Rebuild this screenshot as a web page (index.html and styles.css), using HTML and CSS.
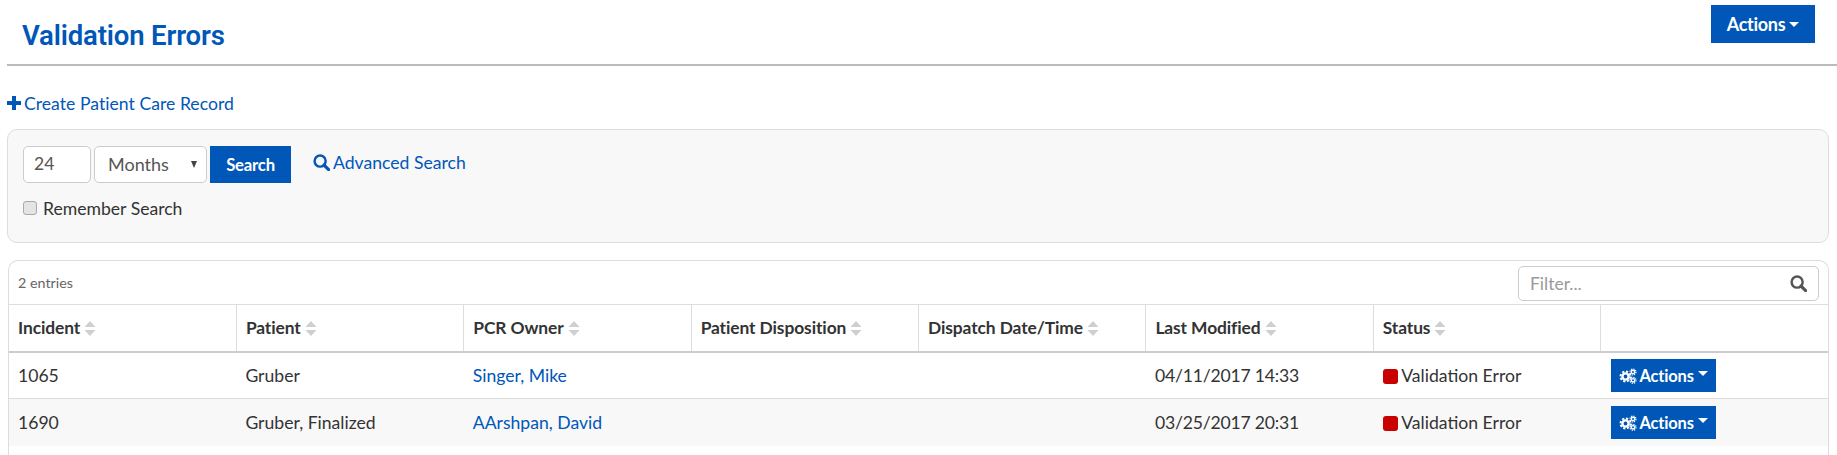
FILE: index.html
```html
<!DOCTYPE html>
<html lang="en">
<head>
<meta charset="utf-8">
<title>Validation Errors</title>
<link rel="stylesheet" href="styles.css">
</head>
<body>
<svg class="defs" width="0" height="0" aria-hidden="true">
  <symbol id="search" viewBox="0 0 16 16"><circle cx="6.7" cy="6.7" r="5.2" fill="none" stroke="currentColor" stroke-width="2.3"/><path d="M10.4 10.4l4.3 4.3" fill="none" stroke="currentColor" stroke-width="3" stroke-linecap="round"/></symbol>
  <symbol id="sort" viewBox="0 0 12 15"><path d="M6 0l5.5 6H.5zM6 15L.5 9h11z" fill="#cfcfcf"/></symbol>
  <symbol id="cogs" viewBox="0 0 18 16"><g fill="none" stroke="#fff"><circle cx="6.5" cy="8.5" r="3.1" stroke-width="2.4"/><circle cx="6.5" cy="8.5" r="5" stroke-width="2" stroke-dasharray="2.2 1.7"/><circle cx="14" cy="4" r="1.7" stroke-width="1.4"/><circle cx="14" cy="4" r="3" stroke-width="1.2" stroke-dasharray="1.3 1.05"/><circle cx="14" cy="12.3" r="1.7" stroke-width="1.4"/><circle cx="14" cy="12.3" r="3" stroke-width="1.2" stroke-dasharray="1.3 1.05"/></g></symbol>
</svg>
<div class="page">
  <header class="page-head">
    <h1 class="title">Validation Errors</h1>
    <button class="btn btn-top" type="button">Actions<span class="caret"></span></button>
  </header>
  <a class="create" href="#"><span class="plus"></span>Create Patient Care Record</a>
  <section class="search-panel">
    <div class="search-row">
      <input class="field num" type="text" value="24">
      <div class="field select">Months<span class="select-arrow"></span></div>
      <button class="btn btn-search" type="button">Search</button>
      <a class="advanced" href="#"><svg class="ico-search"><use href="#search"/></svg>Advanced Search</a>
    </div>
    <label class="remember"><span class="check"></span>Remember Search</label>
  </section>
  <section class="grid-panel">
    <div class="grid-tools">
      <span class="entries">2 entries</span>
      <div class="filter"><span class="filter-text">Filter...</span><svg class="ico-filter"><use href="#search"/></svg></div>
    </div>
    <table class="grid">
      <thead>
        <tr>
          <th>Incident<svg class="sort"><use href="#sort"/></svg></th>
          <th>Patient<svg class="sort"><use href="#sort"/></svg></th>
          <th>PCR Owner<svg class="sort"><use href="#sort"/></svg></th>
          <th>Patient Disposition<svg class="sort"><use href="#sort"/></svg></th>
          <th>Dispatch Date/Time<svg class="sort"><use href="#sort"/></svg></th>
          <th>Last Modified<svg class="sort"><use href="#sort"/></svg></th>
          <th>Status<svg class="sort"><use href="#sort"/></svg></th>
          <th></th>
        </tr>
      </thead>
      <tbody>
        <tr>
          <td>1065</td><td>Gruber</td><td><a href="#">Singer, Mike</a></td><td></td><td></td>
          <td class="date">04/11/2017 14:33</td>
          <td><span class="status"></span>Validation Error</td>
          <td><button class="btn btn-row" type="button"><svg class="cogs"><use href="#cogs"/></svg>Actions<span class="caret caret-up"></span></button></td>
        </tr>
        <tr class="alt">
          <td>1690</td><td>Gruber, Finalized</td><td><a href="#">AArshpan, David</a></td><td></td><td></td>
          <td class="date">03/25/2017 20:31</td>
          <td><span class="status"></span>Validation Error</td>
          <td><button class="btn btn-row" type="button"><svg class="cogs"><use href="#cogs"/></svg>Actions<span class="caret caret-up"></span></button></td>
        </tr>
      </tbody>
    </table>
  </section>
</div>
</body>
</html>
```

FILE: styles.css
```css
* { box-sizing: border-box; }
html, body { margin: 0; height: 100%; overflow: hidden; background: #fff; }
body { font-family: Lato, "Liberation Sans", sans-serif; font-size: 17.6px; color: #333; }
a { color: #0057b8; text-decoration: none; }
.defs { position: absolute; }
.page { padding: 0 8px 0 7px; }

.page-head {
  display: flex; justify-content: space-between; align-items: flex-start;
  height: 66px; margin-right: -8px; padding: 5px 22px 0 15px;
  border-bottom: 2px solid #bbb;
}
.title {
  margin: 15px 0 0; font-family: Roboto, sans-serif; font-size: 27.5px; line-height: 32px;
  font-weight: 600; color: #0057b8; letter-spacing: -0.15px;
}
.btn {
  border: 0; background: #0057b8; color: #fff; font-family: Lato, sans-serif;
  font-weight: 700; padding: 0; display: inline-flex; align-items: center; justify-content: center;
}
.btn-top { width: 104px; height: 38px; font-size: 18px; letter-spacing: -0.3px; }
.caret {
  width: 0; height: 0; margin-left: 4px;
  border-left: 5px solid transparent; border-right: 5px solid transparent; border-top: 5px solid #fff;
}
.caret-up { margin-bottom: 6px; }

.create { display: flex; align-items: center; height: 22px; margin-top: 26px; letter-spacing: 0.03px; }
.plus {
  width: 14px; height: 14px; margin-right: 3px;
  background:
    linear-gradient(#0057b8, #0057b8) center / 14px 4px no-repeat,
    linear-gradient(#0057b8, #0057b8) center / 4px 14px no-repeat;
}

.search-panel {
  height: 114px; margin-top: 15px; padding: 16px 15px 0;
  background: #f8f8f8; border: 1px solid #ddd; border-radius: 10px;
}
.search-row { display: flex; align-items: flex-start; }
.field {
  height: 37px; background: #fff; border: 1px solid #ccc; border-radius: 5px;
  font-family: Lato, sans-serif; font-size: 18px; color: #555;
}
.num { width: 68px; padding: 0 0 2px 10px; margin-right: 3px; outline: none; font-size: 17.5px; }
.select { position: relative; width: 113px; display: flex; align-items: center; padding: 0 0 2px 13px; margin-right: 3px; }
.select-arrow {
  position: absolute; right: 9px; top: 14px; width: 0; height: 0;
  border-left: 3.5px solid transparent; border-right: 3.5px solid transparent; border-top: 7px solid #444;
}
.btn-search { width: 81px; height: 37px; font-size: 16.7px; letter-spacing: -0.2px; }
.advanced { display: flex; align-items: center; height: 32px; margin-left: 22px; }
.ico-search { width: 17px; height: 17px; margin-right: 3px; }
.remember { display: flex; align-items: center; height: 20px; margin-top: 15px; color: #333; }
.check {
  width: 14px; height: 14px; margin-right: 6px;
  background: #e4e4e4; border: 1px solid #aaa; border-radius: 3px;
}

.grid-panel {
  height: 260px; margin-top: 17px; margin-left: 1px;
  border: 1px solid #ddd; border-radius: 10px 10px 0 0; border-bottom: 0;
}
.grid-tools { display: flex; justify-content: space-between; align-items: flex-start; height: 43px; padding: 5px 9px 0 9px; }
.entries { margin-top: 8px; font-size: 14.3px; color: #666; }
.filter {
  width: 301px; height: 35px; display: flex; align-items: center; justify-content: space-between;
  padding: 0 11px; border: 1px solid #ccc; border-radius: 5px;
}
.filter-text { font-size: 17.5px; color: #999; }
.ico-filter { width: 17px; height: 17px; color: #555; }

.grid { width: 100%; table-layout: fixed; border-collapse: collapse; }
.grid th {
  height: 47px; padding: 0 9px; text-align: left; font-size: 17.4px; font-weight: 700; color: #333;
  letter-spacing: -0.1px; border-top: 1px solid #ddd; border-bottom: 2px solid #ccc; border-left: 1px solid #ddd;
}
.grid th:first-child, .grid td:first-child { border-left: 0; }
.grid td { height: 47px; padding: 0 9px; color: #333; border-bottom: 1px solid #ddd; }
.grid td.date { letter-spacing: -0.2px; }
.grid tr.alt td { background: #f8f8f8; border-bottom: 0; }
.sort { width: 12px; height: 15px; margin-left: 4px; vertical-align: -2px; }
.status {
  display: inline-block; width: 15px; height: 15px; margin: 0 3px 0 1px; vertical-align: -2px;
  background: #c80000; border-radius: 3px;
}
.btn-row { width: 105px; height: 33px; margin-left: 1px; padding-top: 2px; font-size: 16.5px; letter-spacing: -0.2px; vertical-align: middle; }
.cogs { width: 18px; height: 16px; margin-right: 3px; }
```
